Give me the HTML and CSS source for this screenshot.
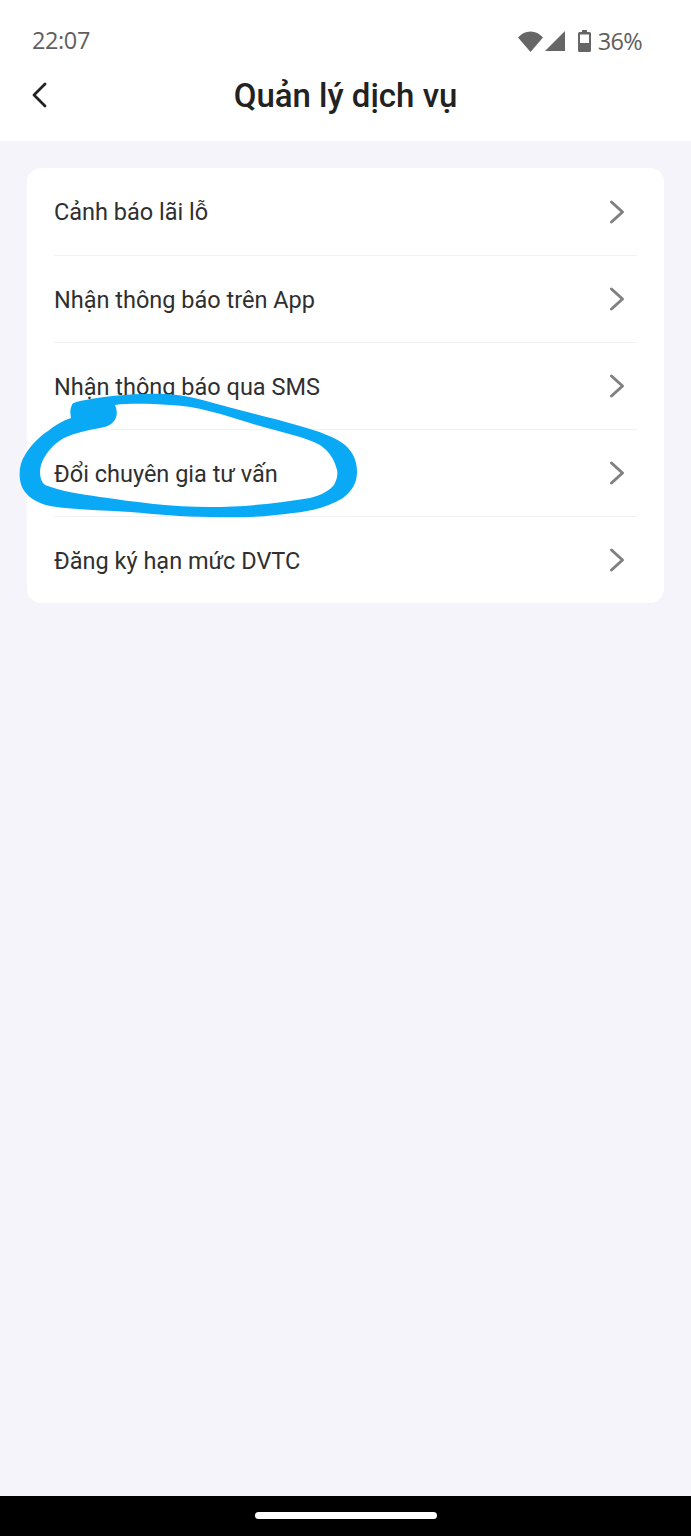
FILE: index.html
```html
<!DOCTYPE html>
<html lang="vi">
<head>
<meta charset="utf-8">
<title>Quản lý dịch vụ</title>
<link rel="stylesheet" href="styles.css">
</head>
<body>
<div class="screen">
  <header class="top">
    <div class="status">
      <span class="time">22:07</span>
      <div class="status-right">
        <svg class="ic-wifi" width="25" height="21" viewBox="0 0 25 21"><path d="M0 6.500C3.500 2.500 7.500 0.500 12.500 0.500s9 2 12.500 6L12.500 21z" fill="#666"/></svg>
        <svg class="ic-signal" width="20" height="20" viewBox="0 0 20 20"><path d="M20 0V20H0z" fill="#666"/></svg>
        <svg class="ic-batt" width="13" height="22" viewBox="0 0 13 22"><path d="M4 0h5v2h2.500a1.500 1.500 0 0 1 1.500 1.500v17a1.500 1.500 0 0 1-1.500 1.500h-10a1.500 1.500 0 0 1-1.500-1.500v-17a1.500 1.500 0 0 1 1.500-1.500h2.500z" fill="#666"/><rect x="2" y="4.500" width="9" height="8.500" fill="#fff"/></svg>
        <span class="pct">36%</span>
      </div>
    </div>
    <div class="nav">
      <svg class="back" width="18" height="26" viewBox="0 0 18 26"><path d="M14 2L3 13l11 11" fill="none" stroke="#222" stroke-width="2.800" stroke-linecap="round" stroke-linejoin="round"/></svg>
      <h1 class="title">Quản lý dịch vụ</h1>
    </div>
  </header>
  <main class="content">
    <ul class="card">
      <li class="row"><span class="label">Cảnh báo lãi lỗ</span><svg class="chev" width="18" height="26" viewBox="0 0 18 26"><path d="M3.500 3l11 10-11 10" fill="none" stroke="#808080" stroke-width="3" stroke-linecap="round" stroke-linejoin="round"/></svg></li>
      <li class="row"><span class="label">Nhận thông báo trên App</span><svg class="chev" width="18" height="26" viewBox="0 0 18 26"><path d="M3.500 3l11 10-11 10" fill="none" stroke="#808080" stroke-width="3" stroke-linecap="round" stroke-linejoin="round"/></svg></li>
      <li class="row"><span class="label">Nhận thông báo qua SMS</span><svg class="chev" width="18" height="26" viewBox="0 0 18 26"><path d="M3.500 3l11 10-11 10" fill="none" stroke="#808080" stroke-width="3" stroke-linecap="round" stroke-linejoin="round"/></svg></li>
      <li class="row"><span class="label">Đổi chuyên gia tư vấn</span><svg class="chev" width="18" height="26" viewBox="0 0 18 26"><path d="M3.500 3l11 10-11 10" fill="none" stroke="#808080" stroke-width="3" stroke-linecap="round" stroke-linejoin="round"/></svg></li>
      <li class="row"><span class="label">Đăng ký hạn mức DVTC</span><svg class="chev" width="18" height="26" viewBox="0 0 18 26"><path d="M3.500 3l11 10-11 10" fill="none" stroke="#808080" stroke-width="3" stroke-linecap="round" stroke-linejoin="round"/></svg></li>
    </ul>
  </main>
  <footer class="navbar"><div class="pill"></div></footer>
  <svg class="scribble" width="691" height="1536" viewBox="0 0 691 1536">
    <path fill="#0aa9f6" fill-rule="evenodd" d="M72 405C72 403 76 402 80 401C105 396 135 393 165 394C185 395 200 399 217 404C245 412 272 418 300 426C318 431 335 437 345 445C353 452 357 461 357 472C357 483 352 491 343 498C328 507 312 511 293 513C265 517 238 518 210 517C182 517 156 514 130 512C102 510 74 510 50 506C36 503 26 496 22 487C18 477 19 464 25 455C30 446 40 436 48 431C54 426 62 421 71 418C70 413 70 409 72 405ZM115 405C117 409 118 416 114 421C111 425 106 427 100 428C87 430 75 433 64 438C53 444 44 455 41 465C39 473 40 481 45 485C60 491 80 494 100 497C135 502 172 507 210 507C245 507 280 503 310 498C322 495 330 490 334 485C337 480 338 474 337 470C335 461 330 452 320 445C312 441 306 439 300 437C283 432 266 428 250 423C224 415 198 406 170 405C151 404 132 403 115 405Z"/>
  </svg>
</div>
</body>
</html>
```
FILE: styles.css
```css
* { box-sizing: border-box; }
html, body { margin: 0; padding: 0; }
body { font-family: Roboto, "Noto Sans", sans-serif; background: #f4f4fa; }
.screen { position: relative; width: 691px; height: 1536px; display: flex; flex-direction: column; overflow: hidden; background: #f4f4fa; }
.top { height: 141px; background: #fff; flex: none; }
.status { height: 68px; padding: 26px 49px 0 32px; display: flex; justify-content: space-between; align-items: flex-start; color: #5f5f5f; }
.time { font-size: 23.5px; line-height: 29px; font-family: "Open Sans", sans-serif; letter-spacing: -0.4px; }
.status-right { display: flex; align-items: center; height: 30px; }
.ic-signal { margin-left: 2px; }
.ic-batt { margin-left: 13px; }
.pct { margin-left: 7px; font-size: 23.5px; line-height: 29px; font-family: "Open Sans", sans-serif; letter-spacing: -0.7px; }
.nav { position: relative; height: 54px; padding-top: 2px; display: flex; align-items: center; justify-content: center; }
.back { position: absolute; left: 31px; top: 14px; }
.title { margin: 0; font-size: 33px; line-height: 52px; font-weight: 500; color: #222; }
.content { flex: 1; padding: 27px 27px 0; }
.card { list-style: none; margin: 0; padding: 0 27px; height: 435px; background: #fff; border-radius: 14px; }
.row { height: 87px; padding: 0 11px 0 0; display: flex; align-items: center; justify-content: space-between; border-top: 1px solid #f2f2f4; font-size: 23.5px; color: #2f2f2f; }
.row:first-child { border-top: none; }
.label { padding-top: 1px; }
.navbar { height: 40px; flex: none; background: #000; display: flex; justify-content: center; padding-top: 16px; }
.pill { width: 182px; height: 7px; border-radius: 4px; background: #fff; }
.scribble { position: absolute; left: 0; top: 0; pointer-events: none; }
```
